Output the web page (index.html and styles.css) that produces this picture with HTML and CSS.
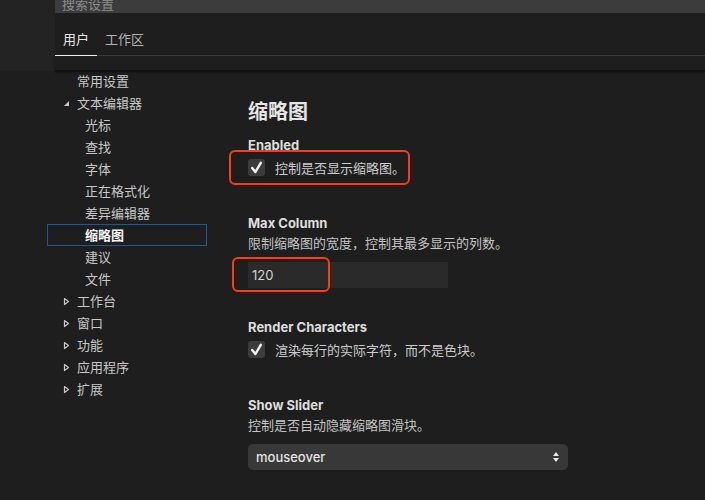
FILE: index.html
```html
<!DOCTYPE html>
<html lang="zh">
<head>
<meta charset="utf-8">
<title>设置</title>
<link rel="stylesheet" href="styles.css">
</head>
<body>
<div class="page">
  <header class="header">
    <div class="gutter"></div>
    <div class="header-main">
      <div class="search"><span class="search-text">搜索设置</span></div>
      <div class="tabs">
        <div class="tab active">用户</div>
        <div class="tab">工作区</div>
      </div>
      <div class="band"></div>
    </div>
  </header>
  <main class="body">
    <nav class="nav">
      <div class="item top"><span class="twisty"></span>常用设置</div>
      <div class="item top"><span class="twisty"><svg width="7" height="7" viewBox="0 0 7 7"><polygon points="1,6 6,6 6,1" fill="#c8c8c8"/></svg></span>文本编辑器</div>
      <div class="item sub">光标</div>
      <div class="item sub">查找</div>
      <div class="item sub">字体</div>
      <div class="item sub">正在格式化</div>
      <div class="item sub">差异编辑器</div>
      <div class="item sub selected">缩略图</div>
      <div class="item sub">建议</div>
      <div class="item sub">文件</div>
      <div class="item top"><span class="twisty"><svg width="7" height="9" viewBox="0 0 7 9"><polygon points="1.5,1.5 5.5,4.5 1.5,7.5" fill="none" stroke="#c8c8c8" stroke-width="1.2" stroke-linejoin="round"/></svg></span>工作台</div>
      <div class="item top"><span class="twisty"><svg width="7" height="9" viewBox="0 0 7 9"><polygon points="1.5,1.5 5.5,4.5 1.5,7.5" fill="none" stroke="#c8c8c8" stroke-width="1.2" stroke-linejoin="round"/></svg></span>窗口</div>
      <div class="item top"><span class="twisty"><svg width="7" height="9" viewBox="0 0 7 9"><polygon points="1.5,1.5 5.5,4.5 1.5,7.5" fill="none" stroke="#c8c8c8" stroke-width="1.2" stroke-linejoin="round"/></svg></span>功能</div>
      <div class="item top"><span class="twisty"><svg width="7" height="9" viewBox="0 0 7 9"><polygon points="1.5,1.5 5.5,4.5 1.5,7.5" fill="none" stroke="#c8c8c8" stroke-width="1.2" stroke-linejoin="round"/></svg></span>应用程序</div>
      <div class="item top"><span class="twisty"><svg width="7" height="9" viewBox="0 0 7 9"><polygon points="1.5,1.5 5.5,4.5 1.5,7.5" fill="none" stroke="#c8c8c8" stroke-width="1.2" stroke-linejoin="round"/></svg></span>扩展</div>
    </nav>
    <section class="content">
      <h1 class="heading">缩略图</h1>

      <div class="title first">Enabled</div>
      <div class="check-row">
        <span class="checkbox"><svg width="17" height="17" viewBox="0 0 17 17"><polyline points="4.2,9 7.4,13 12.8,3.8" fill="none" stroke="#f2f2f2" stroke-width="2.4" stroke-linecap="round" stroke-linejoin="round"/></svg></span>
        <span class="check-label">控制是否显示缩略图。</span>
        <span class="mark mark-enabled"></span>
      </div>

      <div class="title spaced">Max Column</div>
      <div class="desc">限制缩略图的宽度，控制其最多显示的列数。</div>
      <div class="input">120<span class="mark mark-input"></span></div>

      <div class="title after-input">Render Characters</div>
      <div class="check-row">
        <span class="checkbox"><svg width="17" height="17" viewBox="0 0 17 17"><polyline points="4.2,9 7.4,13 12.8,3.8" fill="none" stroke="#f2f2f2" stroke-width="2.4" stroke-linecap="round" stroke-linejoin="round"/></svg></span>
        <span class="check-label">渲染每行的实际字符，而不是色块。</span>
      </div>

      <div class="title spaced">Show Slider</div>
      <div class="desc">控制是否自动隐藏缩略图滑块。</div>
      <div class="select">
        <span>mouseover</span>
        <svg class="arrows" width="8" height="12" viewBox="0 0 8 12"><polygon points="4,1 7,5 1,5" fill="#e8e8e8"/><polygon points="1,7 7,7 4,11" fill="#e8e8e8"/></svg>
      </div>
    </section>
  </main>
</div>
</body>
</html>
```

FILE: styles.css
```css
html, body {
  margin: 0;
  padding: 0;
}

body {
  background: #1e1e1e;
  font-family: Inter, "Noto Sans CJK SC", sans-serif;
  color: #cccccc;
  font-size: 13px;
}

.page {
  width: 705px;
  height: 500px;
  overflow: hidden;
}

.header {
  display: flex;
}

.gutter {
  width: 55px;
  background: #232323;
}

.header-main {
  flex: 1;
}

.search {
  height: 13px;
  background: #3c3c3c;
  overflow: hidden;
  padding-left: 7px;
}

.search-text {
  display: block;
  margin-top: -3px;
  line-height: 13px;
  font-size: 13px;
  color: #8c8c8c;
  font-family: "Noto Sans CJK SC", sans-serif;
}

.tabs {
  display: flex;
  height: 42px;
  border-bottom: 1px solid #3d3d3d;
  font-family: "Noto Sans CJK SC", sans-serif;
}

.tab {
  padding: 16px 8px 0;
  line-height: 20px;
  height: 26px;
  color: #b4b4b4;
  font-size: 13px;
}

.tab.active {
  color: #e6e6e6;
  border-bottom: 1px solid #f0f0f0;
}

.band {
  height: 14px;
  border-bottom: 1px solid #111111;
  box-shadow: 0 1px 2px rgba(0, 0, 0, 0.6);
}

.body {
  display: flex;
}

.nav {
  width: 160px;
  margin-left: 47px;
  margin-top: -1px;
  font-family: "Noto Sans CJK SC", sans-serif;
  font-size: 13px;
  color: #c8c8c8;
}

.item {
  height: 22px;
  line-height: 22px;
  display: flex;
  align-items: center;
  box-sizing: border-box;
}

.item.top {
  padding-left: 16px;
}

.item.sub {
  padding-left: 38px;
}

.twisty {
  width: 14px;
  display: flex;
  align-items: center;
}

.item.selected {
  border: 1px solid #1c5b8c;
  padding-left: 37px;
  color: #f4f4f4;
  font-weight: bold;
}

.content {
  margin-left: 41px;
  padding-top: 27px;
  flex: 1;
}

.heading {
  margin: 0;
  font-size: 20px;
  line-height: 26px;
  font-weight: bold;
  color: #e6e6e6;
  font-family: "Noto Sans CJK SC", sans-serif;
}

.title {
  font-weight: bold;
  font-size: 13px;
  line-height: 18px;
  color: #dedede;
}

.title.first {
  margin-top: 12px;
}

.title.spaced {
  margin-top: 36px;
}

.title.after-input {
  margin-top: 30px;
}

.desc {
  margin-top: 2px;
  line-height: 18px;
  font-size: 13px;
  color: #c4c4c4;
}

.check-row {
  position: relative;
  margin-top: 2px;
  height: 22px;
  display: flex;
  align-items: center;
  gap: 10px;
}

.checkbox {
  width: 17px;
  height: 17px;
  background: #3c3c3c;
  border-radius: 3px;
  display: flex;
}

.check-label {
  color: #cccccc;
  font-size: 13px;
}

.mark {
  position: absolute;
  border: 2px solid #ff3d0a;
  border-radius: 6px;
  box-sizing: border-box;
  pointer-events: none;
}

.mark-enabled {
  left: -19px;
  top: -6px;
  width: 181px;
  height: 35px;
}

.input {
  position: relative;
  margin-top: 10px;
  width: 200px;
  height: 26px;
  line-height: 26px;
  padding-left: 4px;
  box-sizing: border-box;
  background: #2a2a2a;
  color: #d2d2d2;
  font-size: 13px;
}

.mark-input {
  left: -16px;
  top: -5px;
  width: 98px;
  height: 35px;
}

.select {
  margin-top: 10px;
  width: 320px;
  height: 26px;
  box-sizing: border-box;
  padding: 0 8px;
  background: #383838;
  border-radius: 5px;
  display: flex;
  align-items: center;
  justify-content: space-between;
  color: #e4e4e4;
  font-size: 13px;
  font-weight: 500;
}

.arrows {
  display: block;
}
```
